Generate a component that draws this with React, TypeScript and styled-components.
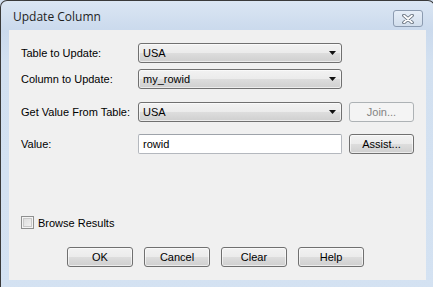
import React from 'react';
import styled, { createGlobalStyle } from 'styled-components';

const GlobalStyle = createGlobalStyle`
  html, body {
    margin: 0;
    padding: 0;
    overflow: hidden;
    background: #d3e0f0;
  }
  body {
    font-family: "Liberation Sans", Arial, sans-serif;
    font-size: 11px;
    color: #000;
  }
`;

function Arrow() {
	return (
		<svg width="7" height="4" viewBox="0 0 7 4">
			<path d="M0 0h7L3.5 4z" fill="#111" />
		</svg>
	);
}

function CloseGlyph() {
	return (
		<svg width="12" height="10" viewBox="0 0 12 10">
			<path d="M2 1.5l8 7M10 1.5l-8 7" stroke="#5f6a77" strokeWidth="3.6" strokeLinecap="round" />
			<path d="M2 1.5l8 7M10 1.5l-8 7" stroke="#fff" strokeWidth="1.8" strokeLinecap="round" />
		</svg>
	);
}

function App() {
	return (
		<>
			<GlobalStyle />
			<Window>
				<TitleBar>
					<Title>Update Column</Title>
					<CloseButton>
						<CloseGlyph />
					</CloseButton>
				</TitleBar>
				<Client>
					<Row>
						<Label>Table to Update:</Label>
						<Combo>
							<span>USA</span>
							<Arrow />
						</Combo>
					</Row>
					<Row $top={6}>
						<Label>Column to Update:</Label>
						<Combo>
							<span>my_rowid</span>
							<Arrow />
						</Combo>
					</Row>
					<Row $top={13}>
						<Label>Get Value From Table:</Label>
						<Combo>
							<span>USA</span>
							<Arrow />
						</Combo>
						<Button disabled>Join...</Button>
					</Row>
					<Row $top={12}>
						<Label>Value:</Label>
						<TextBox defaultValue="rowid" />
						<Button>Assist...</Button>
					</Row>
					<Spacer />
					<CheckRow>
						<CheckBox />
						<span>Browse Results</span>
					</CheckRow>
					<ButtonBar>
						<Button>OK</Button>
						<Button>Cancel</Button>
						<Button>Clear</Button>
						<Button>Help</Button>
					</ButtonBar>
				</Client>
			</Window>
		</>
	);
}

const Window = styled.div`
	width: 435px;
	height: 300px;
	box-sizing: border-box;
	border: 1px solid #3a3a3a;
	border-bottom: none;
	border-radius: 7px 7px 0 0;
	background: linear-gradient(#dbe6f3 0px, #cbdaed 28px, #d2e0f0 60px, #d4e2f2);
	padding: 0 8px;
	display: flex;
	flex-direction: column;
`;

const TitleBar = styled.div`
	height: 29px;
	display: flex;
	align-items: flex-start;
	justify-content: space-between;
`;

const Title = styled.div`
	margin: 9px 0 0 4px;
	line-height: 14px;
	font-family: "Open Sans", "Noto Sans", sans-serif;
	font-size: 12px;
	color: #1e1e1e;
`;

const CloseButton = styled.div`
	margin: 9px 3px 0 0;
	width: 30px;
	height: 17px;
	box-sizing: border-box;
	border: 1px solid #8c9bb0;
	border-radius: 3px;
	background: linear-gradient(#e6eef8, #d2deec);
	display: flex;
	align-items: center;
	justify-content: center;
`;

const Client = styled.div`
	height: 250px;
	box-sizing: border-box;
	background: #f0f0f0;
	padding: 13px 12px 13px 12px;
	display: flex;
	flex-direction: column;
`;

const Row = styled.div<{ $top?: number }>`
	margin-top: ${(p) => p.$top || 0}px;
	height: 20px;
	display: grid;
	grid-template-columns: 110px 204px 65px;
	column-gap: 7px;
	align-items: center;
`;

const Label = styled.div`
	white-space: nowrap;
`;

const Combo = styled.div`
	height: 20px;
	box-sizing: border-box;
	border: 1px solid #707070;
	border-radius: 3px;
	background: linear-gradient(#f2f2f2 0%, #ebebeb 50%, #dddddd 51%, #cfcfcf 100%);
	box-shadow: inset 0 0 0 1px rgba(255, 255, 255, 0.6);
	display: flex;
	align-items: center;
	justify-content: space-between;
	padding: 0 5px 0 4px;
`;

const TextBox = styled.input`
	height: 20px;
	box-sizing: border-box;
	border: 1px solid #b4b8be;
	border-top-color: #9ea3aa;
	border-radius: 2px;
	background: #fff;
	padding: 0 4px;
	font-family: "Liberation Sans", Arial, sans-serif;
	font-size: 11px;
	color: #000;
	outline: none;
`;

const Button = styled.button`
	width: 65px;
	height: 20px;
	box-sizing: border-box;
	border: 1px solid #707070;
	border-radius: 3px;
	background: linear-gradient(#f2f2f2 0%, #ebebeb 50%, #dddddd 51%, #cfcfcf 100%);
	box-shadow: inset 0 0 0 1px rgba(255, 255, 255, 0.6);
	font-family: "Liberation Sans", Arial, sans-serif;
	font-size: 11px;
	color: #000;
	padding: 0;
	&:disabled {
		border-color: #adb2b5;
		background: #f4f4f4;
		box-shadow: none;
		color: #838383;
	}
`;

const Spacer = styled.div`
	flex: 1;
`;

const CheckRow = styled.div`
	display: flex;
	align-items: center;
	gap: 4px;
	height: 13px;
	margin-bottom: 18px;
`;

const CheckBox = styled.span`
	width: 13px;
	height: 13px;
	box-sizing: border-box;
	border: 1px solid #8e8f8f;
	background: linear-gradient(135deg, #d8d8d8, #f6f6f6);
	box-shadow: inset 0 0 0 1px #f4f4f4, inset 0 0 0 2px #c9c9c9;
`;

const ButtonBar = styled.div`
	display: flex;
	gap: 11px;
	padding-left: 46px;
	& > button {
		width: 66px;
	}
`;

export default App;
